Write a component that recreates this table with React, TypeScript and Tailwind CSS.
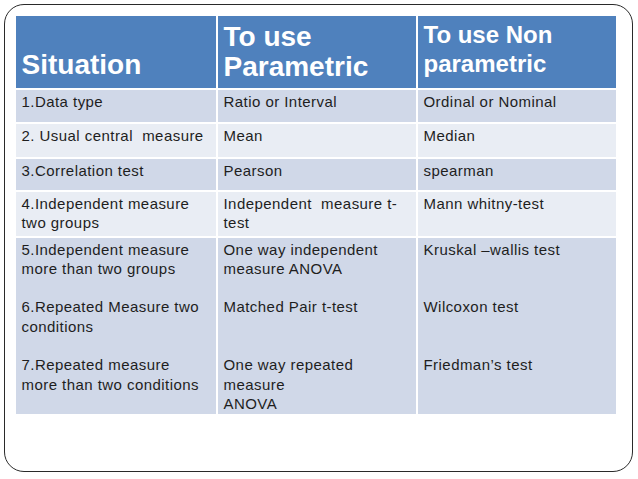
const FONT = { fontFamily: '"Liberation Sans", Arial, sans-serif' };

type Row = { cells: string[][]; tone: "dark" | "light"; h: string };

// each cell is a list of lines; "" = blank line
const rows: Row[] = [
  { cells: [["1.Data type"], ["Ratio or Interval"], ["Ordinal or Nominal"]], tone: "dark", h: "h-[32px]" },
  { cells: [["2. Usual central\u00a0 measure"], ["Mean"], ["Median"]], tone: "light", h: "h-[33px]" },
  { cells: [["3.Correlation test"], ["Pearson"], ["spearman"]], tone: "dark", h: "h-[31px]" },
  {
    cells: [
      ["4.Independent measure", "two groups"],
      ["Independent\u00a0 measure t-", "test"],
      ["Mann whitny-test"],
    ],
    tone: "light",
    h: "h-[44px]",
  },
  {
    cells: [
      [
        "5.Independent measure",
        "more than two groups",
        "",
        "6.Repeated Measure two",
        "conditions",
        "",
        "7.Repeated measure",
        "more than two conditions",
      ],
      [
        "One way independent",
        "measure ANOVA",
        "",
        "Matched Pair t-test",
        "",
        "",
        "One way repeated",
        "measure",
        "ANOVA",
      ],
      ["Kruskal \u2013wallis test", "", "", "Wilcoxon test", "", "", "Friedman\u2019s test"],
    ],
    tone: "dark",
    h: "h-[176px]",
  },
];

export default function App() {
  return (
    <div className="w-[638px] h-[479px] bg-white pt-1 pl-1" style={FONT}>
      <div className="w-[629px] h-[468px] rounded-[20px] border-[1.5px] border-[#2a2a2a] pt-[10.5px] pl-[10.5px]">
        <div className="grid grid-cols-[200px_198px_198px] gap-[2px] w-[600px] bg-white">
          {/* header */}
          <div className="h-[72px] bg-[#4f81bd] text-white font-bold text-[28px] leading-[30px] px-[6px] pb-[8px] flex items-end">
            Situation
          </div>
          <div className="h-[72px] bg-[#4f81bd] text-white font-bold text-[28px] leading-[30px] px-[6px] pt-[6px]">
            To use
            <br />
            Parametric
          </div>
          <div className="h-[72px] bg-[#4f81bd] text-white font-bold text-[24px] leading-[29px] px-[6px] pt-[4px]">
            To use Non
            <br />
            parametric
          </div>

          {rows.map((r, i) =>
            r.cells.map((lines, j) => (
              <div
                key={`${i}-${j}`}
                className={`${r.h} ${r.tone === "dark" ? "bg-[#d0d8e8]" : "bg-[#e9edf4]"} px-[6px] pt-[2px] text-[15px] tracking-[0.45px] leading-[19.3px] text-[#1e1e1e]`}
              >
                {lines.map((l, k) => (
                  <div key={k} className="h-[19.3px] whitespace-pre">
                    {l}
                  </div>
                ))}
              </div>
            ))
          )}
        </div>
      </div>
    </div>
  );
}
